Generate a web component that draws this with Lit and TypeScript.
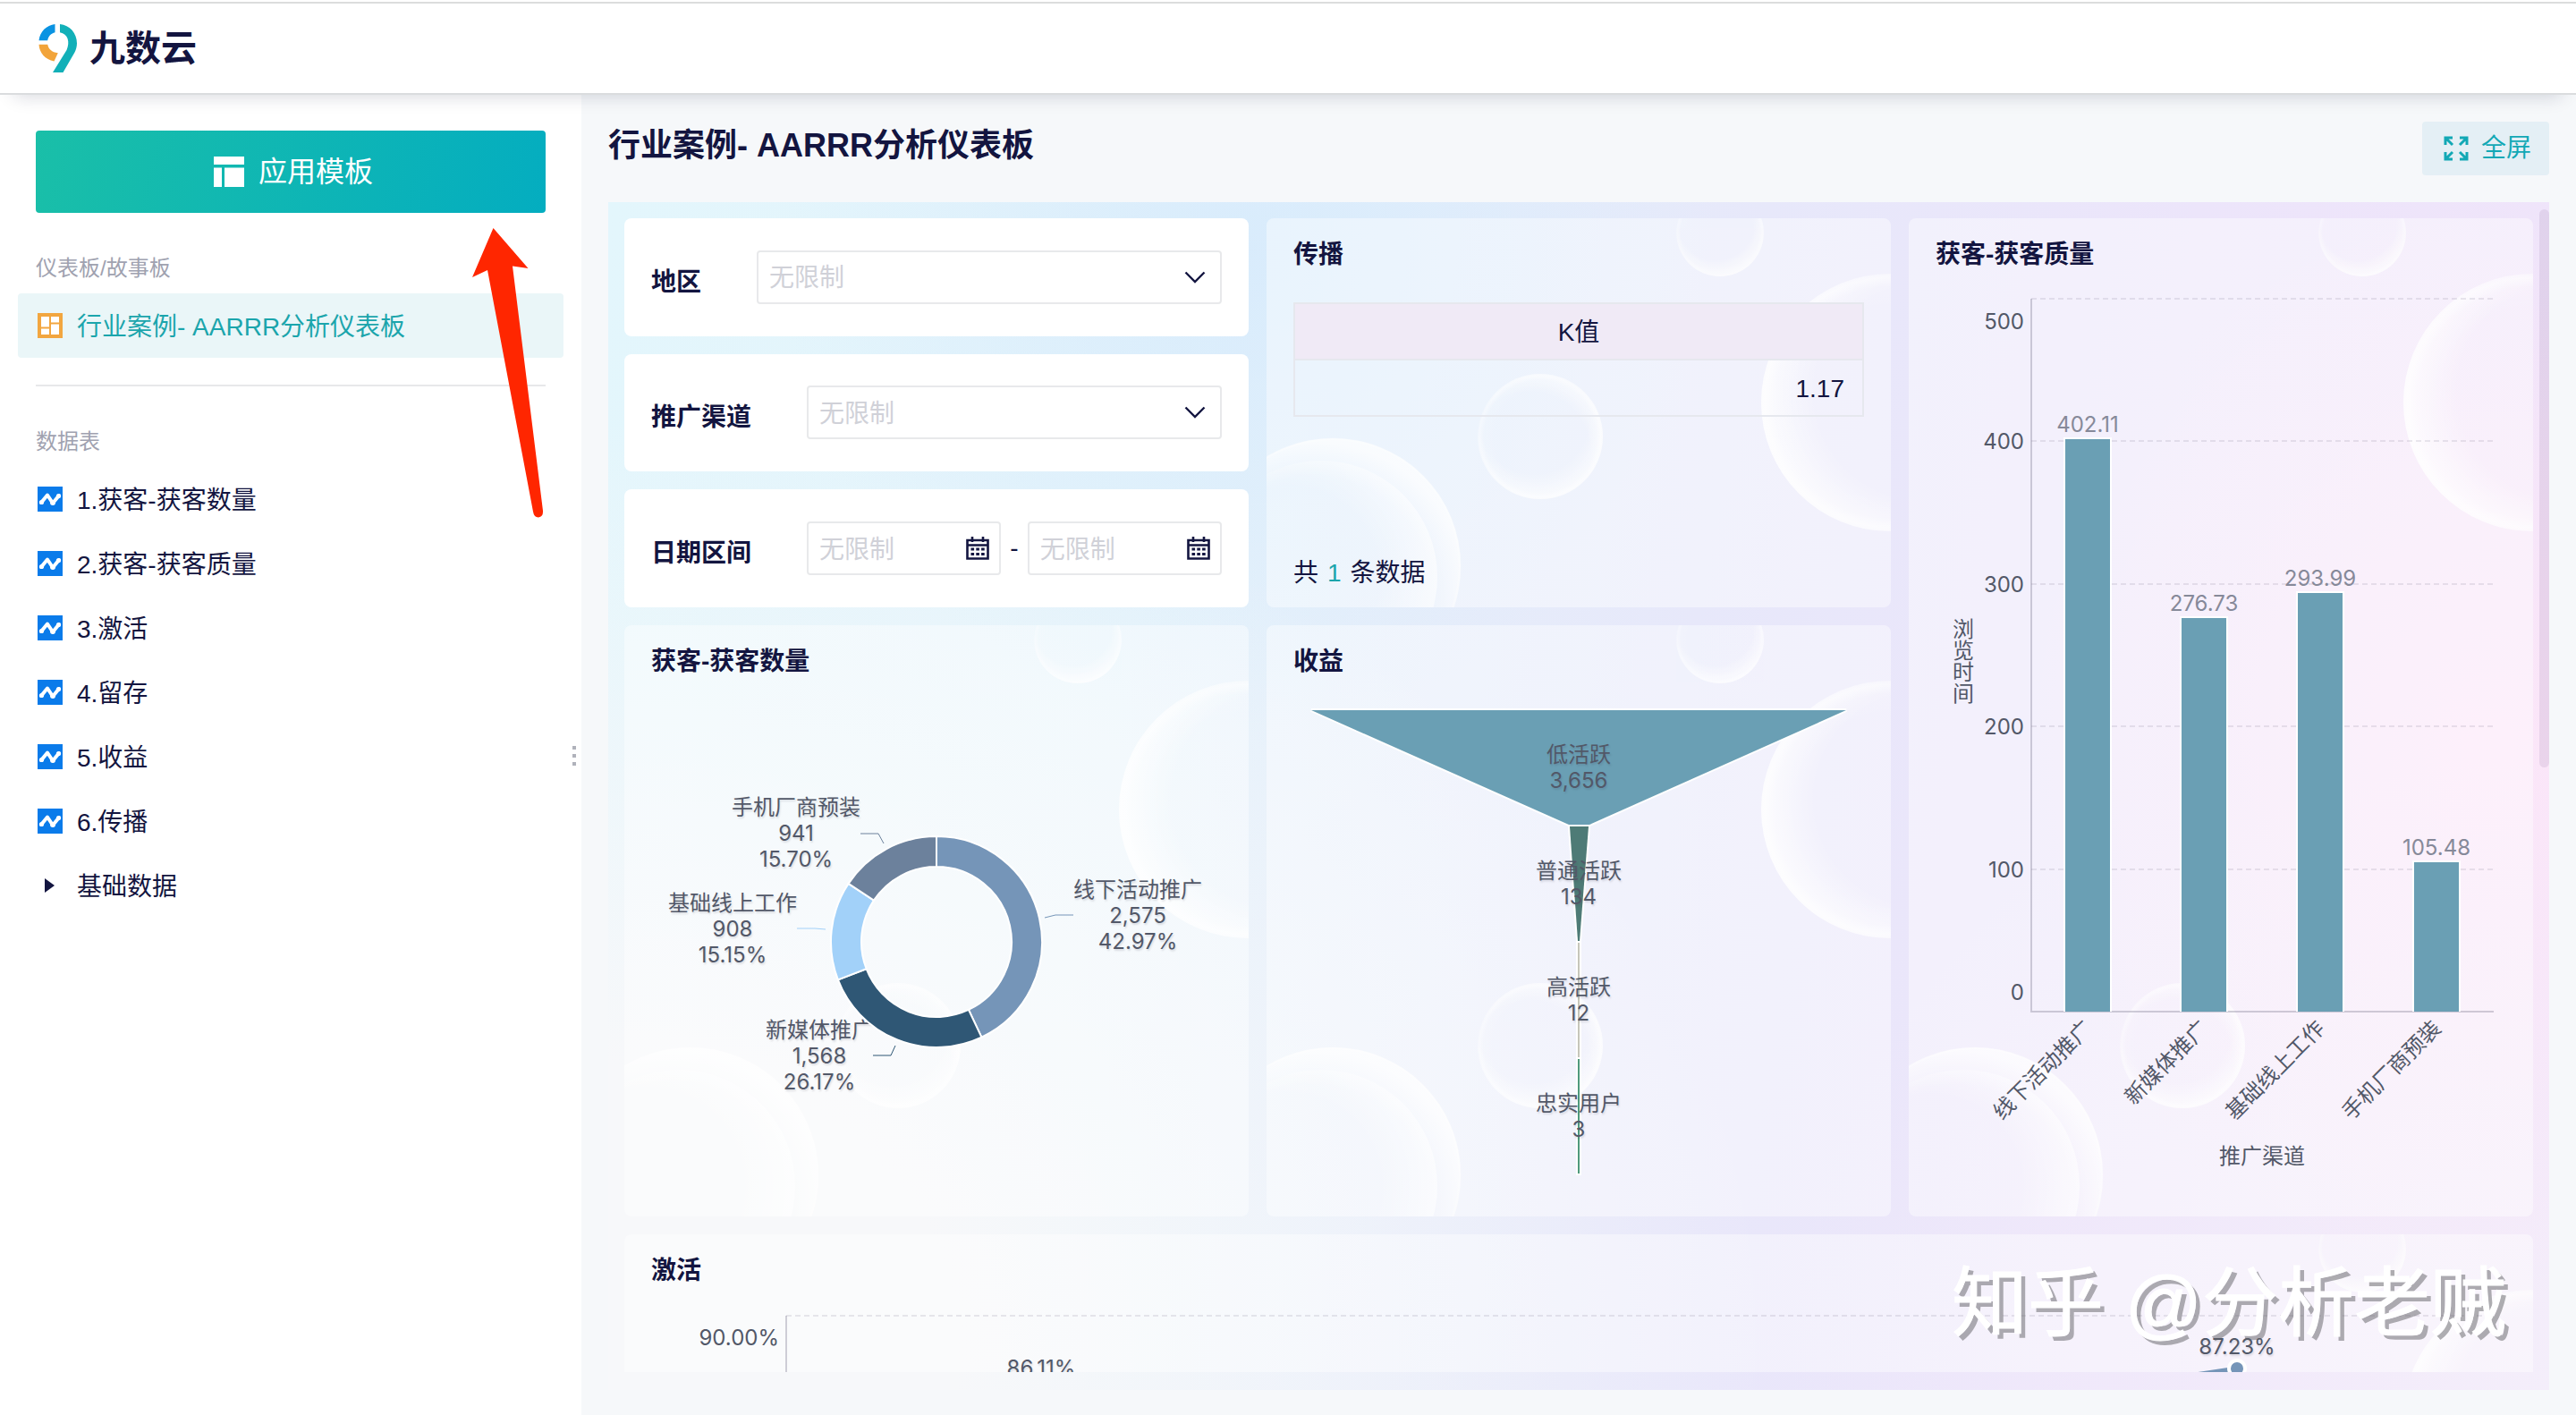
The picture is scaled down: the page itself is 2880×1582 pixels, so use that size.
import { LitElement, html, svg, css } from "lit";
import { customElement } from "lit/decorators.js";

interface Slice {
  name: string;
  value: string;
  share: number;
  color: string;
  label: [number, number];
  leader: string;
}

const SLICES: Slice[] = [
  { name: "线下活动推广", value: "2,575", share: 42.97, color: "#7595b8", label: [574, 236], leader: "470,267 482,264 502,264" },
  { name: "新媒体推广", value: "1,568", share: 26.17, color: "#2f5775", label: [218, 393], leader: "278,421 298,421 303,410" },
  { name: "基础线上工作", value: "908", share: 15.15, color: "#a2d1f9", label: [121, 251], leader: "193,279 213,279 225,280" },
  { name: "手机厂商预装", value: "941", share: 15.7, color: "#6c819c", label: [192, 144], leader: "264,173 284,173 290,184" },
];

const BARS = [
  { name: "线下活动推广", value: 402.11 },
  { name: "新媒体推广", value: 276.73 },
  { name: "基础线上工作", value: 293.99 },
  { name: "手机厂商预装", value: 105.48 },
];

const STAGES = [
  { name: "低活跃", value: "3,656", color: "#6a9fb4", points: "50,35 648,35 361,163 338,163" },
  { name: "普通活跃", value: "134", color: "#4e7b76", points: "339,165 360,165 350,293 348,293" },
  { name: "高活跃", value: "12", color: "#c6c6ba", points: "348,295 350,295 350,423 348,423" },
  { name: "忠实用户", value: "3", color: "#4f9a7c", points: "348,425 350,425 350,553 348,553" },
];

const TABLES = ["1.获客-获客数量", "2.获客-获客质量", "3.激活", "4.留存", "5.收益", "6.传播"];

function ringPath(from: number, to: number, cx: number, cy: number, outer: number, inner: number) {
  const at = (share: number, r: number) => {
    const a = (share / 100) * Math.PI * 2 - Math.PI / 2;
    return `${cx + r * Math.cos(a)} ${cy + r * Math.sin(a)}`;
  };
  const large = to - from > 50 ? 1 : 0;
  return `M${at(from, outer)}A${outer} ${outer} 0 ${large} 1 ${at(to, outer)}L${at(to, inner)}A${inner} ${inner} 0 ${large} 0 ${at(from, inner)}Z`;
}

@customElement("bubble-layer")
class BubbleLayer extends LitElement {
  static styles = css`
    :host {
      position: absolute;
      inset: 0;
      overflow: hidden;
      border-radius: inherit;
      pointer-events: none;
    }
    .top {
      position: absolute;
      top: 0;
      right: 0;
    }
    .bottom {
      position: absolute;
      bottom: 0;
      left: 0;
    }
  `;

  private defs() {
    return svg`<defs>
      <radialGradient id="rim">
        <stop offset="0.72" stop-color="#fff" stop-opacity="0.02" />
        <stop offset="0.9" stop-color="#fff" stop-opacity="0.12" />
        <stop offset="0.97" stop-color="#fff" stop-opacity="0.6" />
        <stop offset="1" stop-color="#fff" stop-opacity="0.25" />
      </radialGradient>
      <radialGradient id="glow" cx="0.62" cy="0.46" r="0.66">
        <stop offset="0.62" stop-color="#fff" stop-opacity="0" />
        <stop offset="0.98" stop-color="#fff" stop-opacity="0.85" />
      </radialGradient>
      <radialGradient id="low" cx="0.45" cy="0.36" r="0.64">
        <stop offset="0.68" stop-color="#fff" stop-opacity="0" />
        <stop offset="1" stop-color="#fff" stop-opacity="0.9" />
      </radialGradient>
      <radialGradient id="high" cx="0.42" cy="0.62" r="0.62">
        <stop offset="0.76" stop-color="#fff" stop-opacity="0" />
        <stop offset="0.98" stop-color="#fff" stop-opacity="0.7" />
      </radialGradient>
      <radialGradient id="inner" cx="0.36" cy="0.5" r="0.64">
        <stop offset="0.6" stop-color="#fff" stop-opacity="0" />
        <stop offset="1" stop-color="#fff" stop-opacity="0.6" />
      </radialGradient>
    </defs>`;
  }

  render() {
    return html`
      <svg class="top" width="260" height="360" viewBox="0 0 260 360" aria-hidden="true">
        ${this.defs()}
        <g opacity="0.8">
          <circle cx="69" cy="16" r="49" fill="url(#rim)" opacity="0.7" />
          <circle cx="69" cy="16" r="49" fill="url(#low)" />
        </g>
        <circle cx="259" cy="206" r="144" fill="url(#rim)" opacity="0.8" />
        <circle cx="259" cy="206" r="144" fill="url(#glow)" />
      </svg>
      <svg class="bottom" width="400" height="280" viewBox="0 0 400 280" aria-hidden="true">
        ${this.defs()}
        <circle cx="306" cy="89" r="70" fill="url(#rim)" opacity="0.7" />
        <circle cx="306" cy="89" r="70" fill="url(#low)" opacity="0.7" />
        <circle cx="306" cy="89" r="70" fill="url(#high)" opacity="0.6" />
        <circle cx="74" cy="234" r="143" fill="url(#high)" />
        <circle cx="61" cy="246" r="130" fill="url(#inner)" />
        <circle cx="74" cy="234" r="142" fill="none" stroke="#fff" stroke-opacity="0.25" stroke-width="3" />
      </svg>
    `;
  }
}

@customElement("app-root")
class AppRoot extends LitElement {
  static styles = css`
    :host {
      display: flex;
      flex-direction: column;
      position: relative;
      height: 100vh;
      overflow: hidden;
      background: #fff;
      color: #131540;
      font-family: "Liberation Sans", "Noto Sans CJK SC", sans-serif;
      font-size: 28px;
      line-height: 40px;
    }
    * {
      box-sizing: border-box;
    }
    h1, h2, ul, p {
      margin: 0;
      padding: 0;
    }
    svg {
      display: block;
    }
    button, input, select {
      font: inherit;
      color: inherit;
      margin: 0;
    }

    .header {
      display: flex;
      align-items: center;
      gap: 14px;
      flex: none;
      height: 104px;
      margin-top: 2px;
      padding-left: 43px;
      border-top: 2px solid #dcdddd;
      border-bottom: 2px solid #dadcde;
      background: #fff;
      box-shadow: 0 16px 20px -16px rgba(20, 25, 60, 0.2);
      z-index: 1;
    }
    .brand {
      font-size: 40px;
      line-height: 48px;
      font-weight: 700;
    }

    .body {
      display: grid;
      grid-template-columns: 650px minmax(0, 1fr);
      flex: 1;
      min-height: 0;
    }

    .sidebar {
      position: relative;
      padding: 40px 20px;
      background: #fff;
    }
    .apply {
      display: flex;
      align-items: center;
      justify-content: center;
      gap: 16px;
      width: calc(100% - 40px);
      height: 92px;
      margin: 0 20px;
      padding: 0 0 0 6px;
      border: 0;
      border-radius: 4px;
      background: linear-gradient(105deg, #1abfa8, #04adc0);
      color: #fff;
      font-size: 32px;
    }
    .caption {
      margin: 44px 20px 10px;
      font-size: 24px;
      line-height: 36px;
      font-weight: 400;
      color: #a0a2b0;
    }
    .list {
      list-style: none;
    }
    .item {
      display: flex;
      align-items: center;
      gap: 16px;
      height: 72px;
      padding-left: 22px;
      border-radius: 4px;
      color: inherit;
      text-decoration: none;
    }
    .text {
      padding-top: 3px;
    }
    .item.active {
      background: #eaf6f8;
      color: #1ba5ac;
    }
    .divider {
      height: 2px;
      margin: 30px 20px 0;
      background: #e7e8ea;
    }
    .grip {
      position: absolute;
      right: 6px;
      top: 728px;
    }

    .main {
      display: flex;
      flex-direction: column;
      gap: 30px;
      min-height: 0;
      padding: 30px 30px 28px;
      background: #f6f8fa;
    }
    .titlebar {
      display: flex;
      justify-content: space-between;
      align-items: flex-start;
    }
    .title {
      padding-top: 2px;
      font-size: 36px;
      line-height: 50px;
      font-weight: 700;
    }
    .full {
      display: flex;
      align-items: center;
      gap: 14px;
      height: 60px;
      padding: 0 20px 0 24px;
      border: 0;
      border-radius: 4px;
      background: #e4eff5;
      color: #12a8b5;
    }

    .canvas {
      position: relative;
      display: flex;
      flex: 1;
      min-height: 0;
      padding: 18px 18px 20px;
      background:
        radial-gradient(ellipse 24% 46% at 97% 46%, rgba(253, 230, 248, 0.9), rgba(253, 230, 248, 0)),
        radial-gradient(ellipse 60% 78% at 0% 96%, rgba(247, 248, 250, 1) 30%, rgba(247, 248, 250, 0)),
        radial-gradient(ellipse 24% 40% at 33% 4%, rgba(214, 234, 252, 0.8), rgba(214, 234, 252, 0)),
        radial-gradient(ellipse 40% 60% at 100% 100%, rgba(244, 238, 250, 1), rgba(244, 238, 250, 0)),
        linear-gradient(100deg, #e3f6fc 0%, #e4f3fb 28%, #e7e8fa 54%, #ece5fa 74%, #f1e4fa 100%);
    }
    .scroller {
      flex: 1;
      min-width: 0;
      overflow: hidden;
    }
    .thumb {
      position: absolute;
      right: 0;
      top: 8px;
      width: 11px;
      height: 47%;
      border-radius: 6px;
      background: rgba(120, 90, 150, 0.13);
    }
    .grid {
      display: grid;
      grid-template-columns: repeat(3, minmax(0, 1fr));
      grid-template-rows: minmax(435px, auto) auto auto;
      gap: 20px;
    }
    .filters {
      display: grid;
      grid-auto-rows: 1fr;
      gap: 20px;
    }
    .filter {
      display: flex;
      align-items: center;
      gap: 62px;
      padding: 0 30px;
      border-radius: 8px;
      background: #fff;
    }
    .name {
      flex: none;
      padding-top: 12px;
      font-weight: 700;
    }
    .box {
      display: grid;
      flex: 1;
      min-width: 0;
      align-items: center;
    }
    .box > * {
      grid-area: 1 / 1;
    }
    .box svg {
      justify-self: end;
      margin-right: 18px;
      pointer-events: none;
    }
    .box.date svg {
      margin-right: 13px;
    }
    .field {
      width: 100%;
      min-width: 0;
      height: 60px;
      padding: 3px 12px 0;
      border: 2px solid #e8e9eb;
      border-radius: 4px;
      background: #fff;
      color: #d0d1d8;
      appearance: none;
      outline: none;
    }
    .field::placeholder {
      color: #d0d1d8;
      opacity: 1;
    }
    .range {
      display: flex;
      flex: 1;
      align-items: center;
      gap: 10px;
      min-width: 0;
    }

    .card {
      position: relative;
      display: flex;
      flex-direction: column;
      min-width: 0;
      border-radius: 8px;
      background: rgba(255, 255, 255, 0.42);
    }
    .tall {
      grid-column: 3;
      grid-row: 1 / 3;
    }
    .wide {
      grid-column: 1 / -1;
    }
    .cardtitle {
      position: relative;
      height: 60px;
      padding: 22px 30px 0;
      font-size: 28px;
      line-height: 38px;
      font-weight: 700;
    }
    .chart {
      position: relative;
      width: 100%;
      height: auto;
      font-family: Inter, "Noto Sans CJK SC", sans-serif;
      font-size: 24px;
      fill: #525868;
    }
    .mid {
      text-anchor: middle;
    }
    .end {
      text-anchor: end;
    }
    .shade {
      text-shadow: 1px 2px 2px rgba(60, 60, 80, 0.15);
    }
    .pale {
      fill: #868999;
    }

    .tablewrap {
      position: relative;
      margin: 34px 30px 0;
    }
    .table {
      width: 100%;
      border-collapse: collapse;
    }
    .table th, .table td {
      height: 63px;
      padding: 2px 20px 0;
      border: 2px solid #e6e8ee;
      font-weight: 400;
    }
    .table th {
      background: #f0eaf6;
      text-align: center;
    }
    .table td {
      text-align: right;
    }
    .total {
      position: relative;
      display: flex;
      gap: 10px;
      margin: auto 30px 18px;
    }
    .count {
      color: #1ba5ac;
    }

    .arrow {
      position: absolute;
      left: 520px;
      top: 250px;
      z-index: 2;
      pointer-events: none;
    }
    .watermark {
      position: absolute;
      right: 78px;
      bottom: 74px;
      z-index: 2;
      font-size: 85px;
      line-height: 100px;
      color: #fff;
      -webkit-text-stroke: 1px #fff;
      text-shadow: 5px 5px 0 rgba(95, 95, 100, 0.5);
      white-space: nowrap;
      pointer-events: none;
    }
  `;

  private chevron() {
    return html`<svg width="24" height="14" viewBox="0 0 24 14" aria-hidden="true">
      <path d="M1.500 1.500L12 12L22.500 1.500" fill="none" stroke="#131540" stroke-width="2.400" />
    </svg>`;
  }

  private calendar() {
    return html`<svg width="26" height="26" viewBox="0 0 26 26" aria-hidden="true">
      <path d="M1.500 4h23v20.500h-23zM1.500 9.500h23" fill="none" stroke="#131540" stroke-width="2.600" />
      <path d="M7 0v6M19 0v6" stroke="#131540" stroke-width="2.600" />
      <path d="M5.500 14h3.600m2.200 0h3.600m2.200 0h3.600M5.500 19.500h3.600m2.200 0h3.600m2.200 0h3.600" stroke="#131540" stroke-width="3" />
    </svg>`;
  }

  private selectRow(id: string, name: string) {
    return html`<div class="filter">
      <label class="name" for=${id}>${name}</label>
      <div class="box">
        <select class="field" id=${id}><option>无限制</option></select>
        ${this.chevron()}
      </div>
    </div>`;
  }

  private dateBox(id: string, label: string) {
    return html`<div class="box date">
      <input class="field" id=${id} type="text" placeholder="无限制" aria-label=${label} />
      ${this.calendar()}
    </div>`;
  }

  private donut() {
    let sum = 0;
    const total = SLICES.reduce((s, x) => s + x.share, 0);
    return html`<svg class="chart" viewBox="0 0 698 601">
      ${SLICES.map(
        (s) => svg`
          <g class="mid shade">
            <text x=${s.label[0]} y=${s.label[1] + 8}>${s.name}</text>
            <text x=${s.label[0]} y=${s.label[1] + 37}>${s.value}</text>
            <text x=${s.label[0]} y=${s.label[1] + 66}>${s.share.toFixed(2)}%</text>
          </g>
          <polyline points=${s.leader} fill="none" stroke=${s.color} stroke-width="1" />`
      )}
      ${SLICES.map((s) => {
        const from = (sum / total) * 100;
        sum += s.share;
        return svg`<path d=${ringPath(from, (sum / total) * 100, 349, 294, 118, 84)} fill=${s.color} stroke="#fff" stroke-width="2" />`;
      })}
    </svg>`;
  }

  private funnel() {
    return html`<svg class="chart" viewBox="0 0 698 601">
      ${STAGES.map((s) => svg`<polygon points=${s.points} fill="#fff" stroke="#fff" stroke-width="4" />`)}
      ${STAGES.map((s) => svg`<polygon points=${s.points} fill=${s.color} />`)}
      ${STAGES.map(
        (s, i) => svg`<g class="mid shade">
          <text x="349" y=${93 + i * 130}>${s.name}</text>
          <text x="349" y=${122 + i * 130}>${s.value}</text>
        </g>`
      )}
    </svg>`;
  }

  private bars() {
    const base = 827;
    const unit = 1.594;
    const ticks = [0, 100, 200, 300, 400, 500];
    return html`<svg class="chart" viewBox="0 0 698 1056">
      ${ticks.map((t) => {
        const y = Math.round(base - t * unit);
        const shift = t === 500 ? 25 : t === 0 ? -22 : 0;
        return svg`
          ${t > 0 ? svg`<path d="M137 ${y}H653" stroke="#7a7890" stroke-opacity="0.16" stroke-width="2" stroke-dasharray="6 4" />` : null}
          <text class="end" x="129" y=${y + shift + 9}>${t}</text>`;
      })}
      <path d="M137 30V827H654" fill="none" stroke="#7a7890" stroke-opacity="0.35" stroke-width="2" />
      ${BARS.map((b, i) => {
        const x = 200 + i * 130;
        const h = Math.round(b.value * unit) - 1;
        return svg`
          <rect x=${x - 27} y=${base - h - 2} width="54" height=${h + 2} fill="#fff" />
          <rect x=${x - 25} y=${base - h} width="50" height=${h} fill="#6a9fb4" />
          <text class="mid pale" x=${x} y=${base - h - 8}>${b.value}</text>
          <text class="end" transform="translate(${x} 841) rotate(-45)" x="0" y="9">${b.name}</text>`;
      })}
      <text class="mid">
        ${["浏", "览", "时", "间"].map((c, i) => svg`<tspan x="61" y=${408 + i * 24}>${c}</tspan>`)}
      </text>
      <text class="mid" x="395" y="997">推广渠道</text>
    </svg>`;
  }

  private trend() {
    return html`<svg class="chart" viewBox="0 0 2134 400">
      <path d="M181 31H2090" stroke="#7a7890" stroke-opacity="0.16" stroke-width="2" stroke-dasharray="6 4" />
      <path d="M181 31V400" stroke="#7a7890" stroke-opacity="0.35" stroke-width="2" />
      <text class="end" x="173" y="64">90.00%</text>
      <text class="mid shade" x="466" y="98">86.11%</text>
      <path d="M466 114L1135 190L1803 90" fill="none" stroke="#7595b8" stroke-width="5" />
      <circle cx="1803" cy="90" r="9" fill="#7595b8" stroke="#fff" stroke-width="4" />
      <text class="mid shade" x="1803" y="74">87.23%</text>
    </svg>`;
  }

  render() {
    return html`
      <header class="header">
        <svg width="43" height="54" viewBox="0 0 43 54" aria-hidden="true">
          <path d="M18.500 0C9 1 1.500 8.500 0.500 18.300H10.200C11 13.600 14.200 10.300 18.500 9.300Z" fill="#0a93e2" />
          <path d="M0.500 22.700H10.300C11 27.500 15 31.500 21.800 32.200L17.500 41.500C7.500 39.500 1 32 0.500 22.700Z" fill="#f2a43a" />
          <path d="M24 0C35 1 43 10 43 21.500C43 25 42 28.500 40.500 31.500L27.500 54H16L31.500 29C35.500 20 33 11 24 9.300Z" fill="#12b0b8" />
        </svg>
        <span class="brand">九数云</span>
      </header>
      <div class="body">
        <nav class="sidebar">
          <button class="apply" type="button">
            <svg width="34" height="34" viewBox="0 0 34 34" aria-hidden="true">
              <path d="M0 0H34V9H0ZM0 12.500H9V34H0ZM12 12.500H34V34H12Z" fill="#fff" />
            </svg>
            应用模板
          </button>
          <h2 class="caption">仪表板/故事板</h2>
          <a class="item active" href="#board">
            <svg width="28" height="28" viewBox="0 0 28 28" aria-hidden="true">
              <rect width="28" height="28" fill="#f2a640" />
              <path d="M4 4H13V15.500H4ZM4 17.500H13V24H4ZM15 4H24V10.500H15ZM15 12.500H24V24H15Z" fill="#fff" />
            </svg>
            <span class="text">行业案例- AARRR分析仪表板</span>
          </a>
          <div class="divider"></div>
          <h2 class="caption">数据表</h2>
          <ul class="list">
            ${TABLES.map(
              (t) => html`<li>
                <a class="item" href="#table">
                  <svg width="28" height="28" viewBox="0 0 28 28" aria-hidden="true">
                    <rect width="28" height="28" fill="#0a7bea" />
                    <path d="M4 18L11 9.500L17 18.500L24 10" fill="none" stroke="#fff" stroke-width="4" stroke-linejoin="round" stroke-linecap="round" />
                    <circle cx="4.500" cy="17.500" r="2.600" fill="#fff" /><circle cx="17" cy="18" r="3" fill="#fff" /><circle cx="23.500" cy="10.500" r="2.600" fill="#fff" />
                  </svg>
                  <span class="text">${t}</span>
                </a>
              </li>`
            )}
            <li>
              <a class="item" href="#base">
                <svg width="28" height="28" viewBox="0 0 28 28" aria-hidden="true">
                  <path d="M8 6L19 14L8 22Z" fill="#131540" />
                </svg>
                <span class="text">基础数据</span>
              </a>
            </li>
          </ul>
          <svg class="grip" width="4" height="24" viewBox="0 0 4 24" aria-hidden="true">
            <path d="M0 0h4v4H0zM0 9h4v4H0zM0 18h4v4H0z" fill="#b0b2bb" />
          </svg>
        </nav>
        <main class="main">
          <div class="titlebar">
            <h1 class="title">行业案例- AARRR分析仪表板</h1>
            <button class="full" type="button">
              <svg width="28" height="28" viewBox="0 0 28 28" aria-hidden="true">
                <g fill="none" stroke="#12a8b5" stroke-width="3">
                  <path d="M2 10V2H10M2 2L10 10" /><path d="M18 2H26V10M26 2L18 10" />
                  <path d="M2 18V26H10M2 26L10 18" /><path d="M26 18V26H18M26 26L18 18" />
                </g>
              </svg>
              <span>全屏</span>
            </button>
          </div>
          <div class="canvas">
            <div class="scroller">
              <div class="grid">
                <div class="filters">
                  ${this.selectRow("region", "地区")} ${this.selectRow("channel", "推广渠道")}
                  <div class="filter">
                    <label class="name" for="from">日期区间</label>
                    <div class="range">
                      ${this.dateBox("from", "日期区间")}<span>-</span>${this.dateBox("to", "日期区间")}
                    </div>
                  </div>
                </div>
                <section class="card">
                  <bubble-layer></bubble-layer>
                  <h2 class="cardtitle">传播</h2>
                  <div class="tablewrap">
                    <table class="table">
                      <thead><tr><th scope="col">K值</th></tr></thead>
                      <tbody><tr><td>1.17</td></tr></tbody>
                    </table>
                  </div>
                  <p class="total"><span>共</span><span class="count">1</span><span>条数据</span></p>
                </section>
                <section class="card tall">
                  <bubble-layer></bubble-layer>
                  <h2 class="cardtitle">获客-获客质量</h2>
                  ${this.bars()}
                </section>
                <section class="card">
                  <bubble-layer></bubble-layer>
                  <h2 class="cardtitle">获客-获客数量</h2>
                  ${this.donut()}
                </section>
                <section class="card">
                  <bubble-layer></bubble-layer>
                  <h2 class="cardtitle">收益</h2>
                  ${this.funnel()}
                </section>
                <section class="card wide">
                  <bubble-layer></bubble-layer>
                  <h2 class="cardtitle">激活</h2>
                  ${this.trend()}
                </section>
              </div>
            </div>
            <div class="thumb"></div>
          </div>
        </main>
      </div>
      <svg class="arrow" width="100" height="340" viewBox="0 0 100 340" aria-hidden="true">
        <path d="M31.500 5L70.500 50L53 47.500L87 321Q87.500 328 82 328.500Q77 328.500 76 322L25 52L8 60Z" fill="#ff2600" />
      </svg>
      <div class="watermark">知乎 @分析老贼</div>
    `;
  }
}
